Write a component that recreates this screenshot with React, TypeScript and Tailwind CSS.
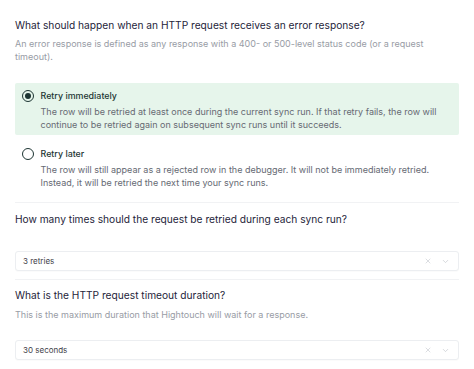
import { X, ChevronDown } from 'lucide-react';

const font = { fontFamily: 'Inter, "Noto Sans", sans-serif' };

function Radio({ checked }: { checked: boolean }) {
  return (
    <span className="mt-[1px] flex h-[11.5px] w-[11.5px] shrink-0 items-center justify-center rounded-full border-[1.8px] border-[#1d3533]">
      {checked && <span className="h-[5.5px] w-[5.5px] rounded-full bg-[#1d3533]" />}
    </span>
  );
}

function Option({ checked, title, children }: { checked: boolean; title: string; children: React.ReactNode }) {
  return (
    <div className={`flex gap-[7px] rounded-[2px] pl-[7px] pr-[10px] pt-[6px] pb-[4px] ${checked ? 'bg-[#e6f5eb]' : ''}`}>
      <Radio checked={checked} />
      <div>
        <div className="text-[8.9px] font-medium leading-[13px] text-[#1d3533]">{title}</div>
        <p className="mt-[3px] text-[9px] leading-[13px] text-[#666a73]">{children}</p>
      </div>
    </div>
  );
}

function Select({ value }: { value: string }) {
  return (
    <div className="flex h-[20px] items-center rounded-[3px] border border-[#eceef1] bg-white pl-[7px] pr-[8px] shadow-[0_1px_1px_rgba(0,0,0,0.02)]">
      <span className="flex-1 text-[8px] text-[#3f424a]">{value}</span>
      <X className="h-[8px] w-[8px] text-[#c9ccd1]" strokeWidth={2} />
      <ChevronDown className="ml-[9px] h-[9px] w-[9px] text-[#c9ccd1]" strokeWidth={2} />
    </div>
  );
}

export default function App() {
  return (
    <div className="min-h-[369px] w-[474px] bg-white px-[15px] pt-[17px]" style={font}>
      <h2 className="text-[10.2px] leading-[16px] text-[#25243a]">What should happen when an HTTP request receives an error response?</h2>
      <p className="mt-[4px] text-[9px] leading-[13px] text-[#989ca5]">
        An error response is defined as any response with a 400- or 500-level status code (or a request timeout).
      </p>

      <div className="mt-[20px] flex flex-col gap-[6px]">
        <Option checked title="Retry immediately">
          The row will be retried at least once during the current sync run. If that retry fails, the row will continue to be retried again on subsequent sync runs until it succeeds.
        </Option>
        <Option checked={false} title="Retry later">
          The row will still appear as a rejected row in the debugger. It will not be immediately retried. Instead, it will be retried the next time your sync runs.
        </Option>
      </div>

      <div className="mt-[9px] border-t border-[#f1f2f4] pt-[8px]">
        <h2 className="text-[10.2px] leading-[16px] text-[#25243a]">How many times should the request be retried during each sync run?</h2>
        <div className="mt-[24px]">
          <Select value="3 retries" />
        </div>
      </div>

      <div className="mt-[8px] border-t border-[#f1f2f4] pt-[7px]">
        <h2 className="text-[10.2px] leading-[16px] text-[#25243a]">What is the HTTP request timeout duration?</h2>
        <p className="mt-[5px] text-[9px] leading-[13px] text-[#989ca5]">This is the maximum duration that Hightouch will wait for a response.</p>
        <div className="mt-[19px]">
          <Select value="30 seconds" />
        </div>
      </div>
    </div>
  );
}
